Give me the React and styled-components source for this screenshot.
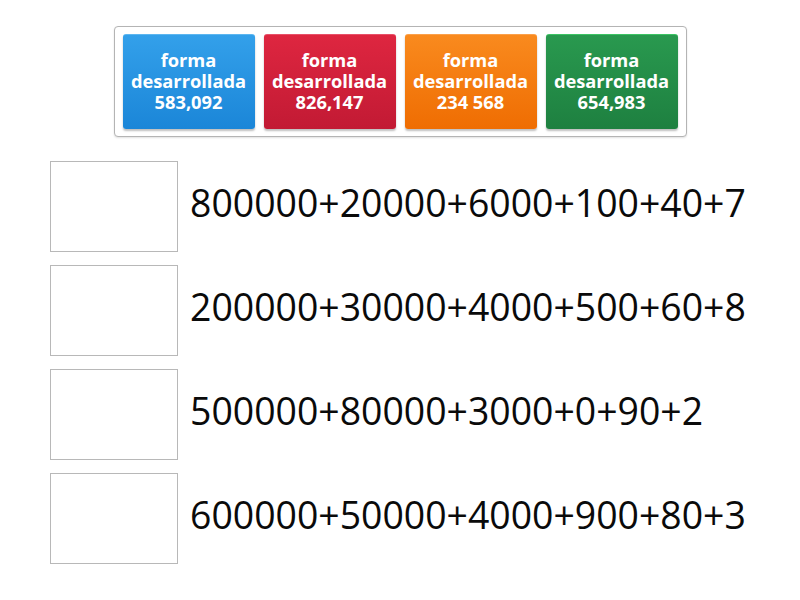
import React from "react";
import styled, { createGlobalStyle } from "styled-components";

const Global = createGlobalStyle`
  html, body { margin: 0; padding: 0; background: #fff; }
  body { font-family: "Open Sans", "Noto Sans", sans-serif; }
`;

const Page = styled.div`
  width: 800px;
  height: 600px;
  display: flex;
  flex-direction: column;
  align-items: center;
  padding-top: 26px;
  box-sizing: border-box;
`;

const Tray = styled.div`
  display: flex;
  gap: 9px;
  padding: 7px 8px;
  border: 1px solid #b4b4b4;
  border-radius: 4px;
  box-shadow: 0 1px 2px rgba(0, 0, 0, 0.12);
  background: #fff;
`;

const Tile = styled.div`
  width: 132px;
  height: 95px;
  box-sizing: border-box;
  border-radius: 3px;
  background: linear-gradient(${(p) => p.$top}, ${(p) => p.$bottom});
  border-top: 1px solid ${(p) => p.$edge};
  box-shadow: 0 2px 2px rgba(0, 0, 0, 0.25);
  display: flex;
  flex-direction: column;
  align-items: center;
  justify-content: center;
  color: #fff;
  font-weight: 700;
  font-size: 18.3px;
  line-height: 21px;
  text-align: center;
  padding-bottom: 4px;
`;

const Line = styled.div`
  height: 21px;
`;

const Rows = styled.div`
  align-self: stretch;
  display: flex;
  flex-direction: column;
  gap: 13px;
  padding: 24px 0 0 50px;
`;

const Row = styled.div`
  display: flex;
  align-items: center;
  gap: 12px;
`;

const Slot = styled.div`
  width: 128px;
  height: 91px;
  box-sizing: border-box;
  border: 1px solid #b8b8b8;
  background: #fff;
  flex-shrink: 0;
`;

const Expr = styled.div`
  font-size: 37.4px;
  color: #0a0a0a;
  white-space: nowrap;
  padding-bottom: 9px;
`;

const tiles = [
  { label: "583,092", top: "#33a0ea", bottom: "#1b86d8", edge: "#5cb6f0" },
  { label: "826,147", top: "#de2640", bottom: "#c21a34", edge: "#e85068" },
  { label: "234 568", top: "#f98a1e", bottom: "#ef6d02", edge: "#fba04a" },
  { label: "654,983", top: "#29994f", bottom: "#1e8040", edge: "#3cc464" },
];

const rows = [
  "800000+20000+6000+100+40+7",
  "200000+30000+4000+500+60+8",
  "500000+80000+3000+0+90+2",
  "600000+50000+4000+900+80+3",
];

export default function App() {
  return (
    <>
      <Global />
      <Page>
        <Tray>
          {tiles.map((t) => (
            <Tile key={t.label} $top={t.top} $bottom={t.bottom} $edge={t.edge}>
              <Line>forma</Line>
              <Line>desarrollada</Line>
              <Line>{t.label}</Line>
            </Tile>
          ))}
        </Tray>
        <Rows>
          {rows.map((r) => (
            <Row key={r}>
              <Slot />
              <Expr>{r}</Expr>
            </Row>
          ))}
        </Rows>
      </Page>
    </>
  );
}
